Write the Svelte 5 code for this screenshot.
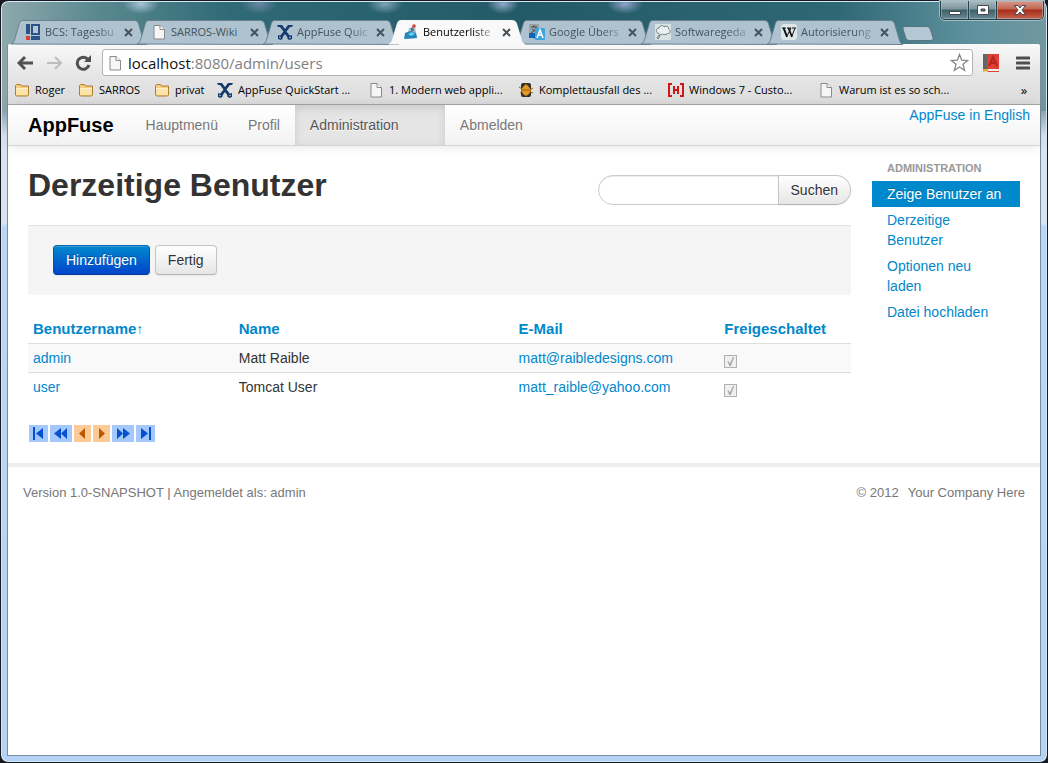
<script>
  const tabs = [
    { icon: 'bcs', title: 'BCS: Tagesbu', cut: true },
    { icon: 'page', title: 'SARROS-Wiki' },
    { icon: 'fuse', title: 'AppFuse Quic', cut: true },
    { icon: 'users', title: 'Benutzerliste', active: true, cut: true },
    { icon: 'translate', title: 'Google Übers', cut: true },
    { icon: 'cloud', title: 'Softwaregeda', cut: true },
    { icon: 'wiki', title: 'Autorisierung', cut: true }
  ];
  const bookmarks = [
    { icon: 'folder', title: 'Roger' },
    { icon: 'folder', title: 'SARROS' },
    { icon: 'folder', title: 'privat' },
    { icon: 'fuse', title: 'AppFuse QuickStart ...' },
    { icon: 'page', title: '1. Modern web appli...' },
    { icon: 'bug', title: 'Komplettausfall des ...' },
    { icon: 'heise', title: 'Windows 7 - Custo...' },
    { icon: 'page', title: 'Warum ist es so sch...' }
  ];
  const users = [
    { login: 'admin', name: 'Matt Raible', mail: 'matt@raibledesigns.com' },
    { login: 'user', name: 'Tomcat User', mail: 'matt_raible@yahoo.com' }
  ];
  const sideLinks = ['Derzeitige Benutzer', 'Optionen neu laden', 'Datei hochladen'];
  const pager = [
    { label: 'Erste Seite', w: 19, d: 'M4 2h2v13H4zM14 3v11L7 8.500z' },
    { label: 'Zehn zurück', w: 22, d: 'M11 3v11L4 8.500zM17 3v11l-6-5.500z' },
    { label: 'Vorige Seite', w: 17, warm: true, d: 'M11 3v11L5 8.500z' },
    { label: 'Nächste Seite', w: 17, warm: true, d: 'M6 3v11l6-5.500z' },
    { label: 'Zehn vor', w: 22, d: 'M5 3v11l6-5.500zM11 3v11l7-5.500z' },
    { label: 'Letzte Seite', w: 19, d: 'M13 2h2v13h-2zM5 3v11l7-5.500z' }
  ];
  let query = $state('');
  let url = $state('localhost:8080/admin/users');
</script>

{#snippet icon(name)}
  <svg class="icon" viewBox="0 0 16 16" width="16" height="16" aria-hidden="true">
    {#if name === 'bcs'}
      <path d="M1 0h4v10H1zM6 0h9v11H6z" fill="#2b5486" />
      <path d="M8 2h5v7H8z" fill="#b9c7d4" />
      <path d="M1 12h4v4H1z" fill="#d9403c" />
      <path d="M6 12h9v4H6z" fill="#2b5486" />
    {:else if name === 'page'}
      <path d="M3 1.500h6l4.500 4V15H3z" fill="#f6f6f6" stroke="#8b8b8b" />
      <path d="M9 1.500v4h4.500" fill="#fff" stroke="#8b8b8b" />
    {:else if name === 'fuse'}
      <path d="M0 1h5l3 4 3-4h5l-1 2h-2L9.500 7.500 13 12l-2 2-3-4-3 4-2-2 3.500-4.500L3 3H1z" fill="#173a6d" />
      <path d="M1 11l3 1 2 2-2 2-3-1z" fill="#173a6d" />
      <path d="M15 11l-3 1-2 2 2 2 3-1z" fill="#173a6d" />
      <path d="M2 13l2 1M14 13l-2 1" stroke="#a9bcd6" />
    {:else if name === 'users'}
      <path d="M6 4l6-1 2 11-10 1z" fill="#a9bfca" />
      <path d="M2 9l5-2 6 2 1 5-13 1z" fill="#2585bc" />
      <path d="M5 10l4-2 3 2-4 2z" fill="#63d0ee" />
      <circle cx="11" cy="2" r="1.800" fill="#da3b35" />
      <path d="M8 4l2-1 1 4-3 1z" fill="#4d7390" />
    {:else if name === 'translate'}
      <rect x="0" y="0" width="10" height="10" fill="#9ba5a6" />
      <path d="M2 3h6M5 1v2M7 3c0 3-2 4-5 6M3 5l4 3" stroke="#424d51" fill="none" />
      <path d="M0 9h7v6l-3-1H0z" fill="#1262b5" />
      <rect x="6" y="4" width="10" height="12" rx="1" fill="#40a5df" />
      <path d="M8 14l3-8 3 8M9 11h4" stroke="#fff" fill="none" stroke-width="1.500" />
    {:else if name === 'cloud'}
      <rect width="16" height="16" fill="#d8e4e4" />
      <path d="M4 9.500C0 9 1 4 4 4c1-3 4-3 5-1 3-2 5 0 4.500 2 3 2 1.500 5-1 4.500-2 2-4 1-5 .500-1 1-3 1-3.500-.500z" fill="#eaf0f0" stroke="#6f7b7b" />
      <path d="M4 11l1 1-2 3-1-1z" fill="#eaf0f0" stroke="#6f7b7b" />
    {:else if name === 'wiki'}
      <rect width="16" height="16" rx="3" fill="#dfe6e8" />
      <path d="M1 4h4M6 4h4M11 4h4" fill="none" stroke="#111" />
      <path d="M3 4l3 8 4-8" fill="none" stroke="#111" />
      <path d="M2.500 4l3.500 9M7.500 4l3.500 9" fill="none" stroke="#111" stroke-width="1.800" />
      <path d="M11 12l3-8" fill="none" stroke="#111" />
    {:else if name === 'folder'}
      <path d="M1.500 13V3.500l1-1h4l1 1.500h7V13l-1 1h-11z" fill="#f4cf82" stroke="#ad7d30" />
      <path d="M2 7h12v6H2z" fill="#fbe3a9" />
      <path d="M2 6.500h12" stroke="#fff0c7" />
    {:else if name === 'bug'}
      <rect x="3" y="1" width="10" height="14" rx="2" fill="#35312c" />
      <path d="M5 5l3-3 3 3 2 3-2 4-3 2-3-2-2-4z" fill="#e49a22" />
      <path d="M1 5l3 2M15 6l-3 2M2 11l3-1M15 11l-3-1M4 8h8" stroke="#a05d10" />
    {:else if name === 'heise'}
      <path d="M4 2H1v12h3M12 2h3v12h-3" fill="none" stroke="#cf1717" stroke-width="2" />
      <path d="M6 4v8M10 4v8M6 8h4" fill="none" stroke="#cf1717" stroke-width="2" />
    {/if}
  </svg>
{/snippet}

<div class="window">
  <header class="titlebar">
    <div class="tabs">
      {#each tabs as tab}
        <div class="tab" class:active={tab.active}>
          <svg class="shape" viewBox="0 0 136 25" preserveAspectRatio="none" aria-hidden="true">
            <path d="M0 25C3 24 3 22 4 19L8 5C9 1 10 .500 13 .500H122c4 0 5 1 6 5l4 14c1 3 1 5 4 6z" />
          </svg>
          <button class="tabmain">{@render icon(tab.icon)}<span class:cut={tab.cut}>{tab.title}</span></button>
          <button class="close" aria-label="Tab schließen">
            <svg viewBox="0 0 9 9" width="9" height="9"><path d="M1 1l7 7M8 1L1 8" /></svg>
          </button>
        </div>
      {/each}
      <button class="newtab" aria-label="Neuer Tab">
        <svg viewBox="0 0 32 15" width="32" height="15"><path d="M3 .500h22q2 0 3 2l3 9q1 3-2 3H7q-2 0-3-2L1 3Q0 .500 3 .500z" /></svg>
      </button>
    </div>
    <div class="controls">
      <button class="min" aria-label="Minimieren"><svg viewBox="0 0 14 12" width="14" height="12"><path d="M1.500 7.500h11v3h-11z" /></svg></button>
      <button class="max" aria-label="Maximieren"><svg viewBox="0 0 14 12" width="14" height="12"><path fill-rule="evenodd" d="M1.500 1.500h11v9h-11zM5 5h4v2H5z" /></svg></button>
      <button class="quit" aria-label="Schließen"><svg viewBox="0 0 14 12" width="14" height="12"><path d="M1.500 1.500H5l2 2.500 2-2.500h3.500L9 6l3.500 4.500H9L7 8l-2 2.500H1.500L5 6z" /></svg></button>
    </div>
  </header>

  <div class="body">
    <div class="chrome">
      <div class="toolbar">
        <button class="tool" aria-label="Zurück"><svg viewBox="0 0 17 16" width="17" height="16"><path d="M16 8H3M8 2L2 8l6 6" fill="none" stroke="#505050" stroke-width="3" /></svg></button>
        <button class="tool" aria-label="Vorwärts"><svg viewBox="0 0 17 16" width="17" height="16"><path d="M1 8h13M9 2l6 6-6 6" fill="none" stroke="#bdbdbd" stroke-width="2" /></svg></button>
        <button class="tool" aria-label="Neu laden"><svg viewBox="0 0 17 16" width="17" height="16"><path d="M13 4.500A6 6 0 1 0 14 10" fill="none" stroke="#505050" stroke-width="3" /><path d="M16 0v7H9z" fill="#505050" /></svg></button>
        <div class="omnibox">
          <button aria-label="Seiteninformationen">{@render icon('page')}</button>
          <div class="field">
            <div class="shown" aria-hidden="true"><b>localhost</b>:8080/admin/users</div>
            <input aria-label="Adresse" bind:value={url} />
          </div>
          <button aria-label="Lesezeichen setzen"><svg viewBox="0 0 19 19" width="19" height="19"><path d="M9.500 1.500l2.200 5.700 6 .300-4.700 3.800 1.600 5.900-5.100-3.300-5.100 3.300L6 11.300 1.300 7.500l6-.300z" fill="#fff" stroke="#858585" stroke-width="1.300" /></svg></button>
        </div>
        <button class="book" aria-label="Wörterbuch"><svg viewBox="0 0 16 18" width="16" height="18"><path d="M0 0h4v15H0z" fill="#646464" /><path d="M4 0h12v15H4z" fill="#df4034" /><path d="M4 15h12v2H4z" fill="#eee" /><path d="M4 17h12v1H4z" fill="#df4034" /><path d="M0 15h5v3l-2-1-3 1z" fill="#e6ac22" /><path d="M6 12l4-9 4 9M7 9h6" fill="none" stroke="#b5271f" stroke-width="2" /></svg></button>
        <button class="menu" aria-label="Menü"><svg viewBox="0 0 14 14" width="14" height="14"><path d="M1 2h12M1 7h12M1 12h12" stroke="#4e4e4e" stroke-width="3" stroke-linecap="round" /></svg></button>
      </div>
      <nav class="bookmarks" aria-label="Lesezeichen">
        {#each bookmarks as b}
          <a href="#bookmark">{@render icon(b.icon)}<span>{b.title}</span></a>
        {/each}
        <button aria-label="Weitere Lesezeichen">»</button>
      </nav>
    </div>

    <div class="page">
      <nav class="navbar" aria-label="Hauptnavigation">
        <a class="brand" href="#home">AppFuse</a>
        <a href="#menu">Hauptmenü</a>
        <a href="#profile">Profil</a>
        <a class="current" href="#admin">Administration</a>
        <a href="#logout">Abmelden</a>
        <a class="lang" href="#en">AppFuse in English</a>
      </nav>

      <div class="layout">
        <main>
          <div class="head">
            <h1>Derzeitige Benutzer</h1>
            <form class="search" onsubmit={(e) => e.preventDefault()}>
              <input type="text" aria-label="Suchbegriff" bind:value={query} />
              <button class="btn">Suchen</button>
            </form>
          </div>
          <div class="actions">
            <button class="btn primary">Hinzufügen</button>
            <button class="btn">Fertig</button>
          </div>
          <table>
            <thead>
              <tr>
                <th class="quarter"><a href="#sort">Benutzername<span class="arrow">↑</span></a></th>
                <th class="third"><a href="#sort">Name</a></th>
                <th class="quarter"><a href="#sort">E-Mail</a></th>
                <th><a href="#sort">Freigeschaltet</a></th>
              </tr>
            </thead>
            <tbody>
              {#each users as u}
                <tr>
                  <td><a href="#user">{u.login}</a></td>
                  <td>{u.name}</td>
                  <td><a href="#mail">{u.mail}</a></td>
                  <td><input type="checkbox" checked disabled aria-label="{u.login} freigeschaltet" /></td>
                </tr>
              {/each}
            </tbody>
          </table>
          <div class="pager">
            {#each pager as p}
              <button class:warm={p.warm} aria-label={p.label}><svg viewBox="0 0 {p.w} 17" width={p.w} height="17"><path d={p.d} /></svg></button>
            {/each}
          </div>
        </main>
        <aside>
          <h2>Administration</h2>
          <a class="on" href="#users">Zeige Benutzer an</a>
          {#each sideLinks as s}
            <a href="#side">{s}</a>
          {/each}
        </aside>
      </div>

      <footer>
        <span>Version 1.0-SNAPSHOT | Angemeldet als: admin</span>
        <span class="owner"><span>© 2012</span><a href="#company">Your Company Here</a></span>
      </footer>
    </div>
  </div>
</div>

<style>
  :global(body) { margin: 0; background: #17191f; }
  * { box-sizing: border-box; }
  button { border: 0; padding: 0; margin: 0; background: none; font: inherit; color: inherit; display: flex; align-items: center; justify-content: center; }
  a { text-decoration: none; color: #0088cc; }
  svg { display: block; flex: none; }

  .window {
    min-height: 100vh;
    display: flex;
    flex-direction: column;
    border: 1px solid #17191f;
    border-radius: 8px;
    box-shadow: inset 0 0 0 1px #d5e8f5;
    background:
      radial-gradient(ellipse 18px 10px at 140px 3px, #a9c3d8, transparent),
      radial-gradient(ellipse 18px 10px at 384px 3px, #7fa3b4, transparent),
      radial-gradient(ellipse 16px 10px at 502px 3px, #8fa9c9, transparent),
      radial-gradient(ellipse 18px 10px at 624px 3px, #8fa5c9, transparent),
      radial-gradient(ellipse 18px 10px at 258px 3px, #6b87a6, transparent),
      linear-gradient(90deg, #8fa9ad, #5a8990 9%, #2f6a76 22%, #235a68 50%, #2f6875 80%, #5f929e 93%, #71979f) 0 0 / 100% 110px no-repeat,
      linear-gradient(#7b9ba6 0, #71919d 100px, #d9e4f2 135px, #d9e4f2 222px, #b9d6f6 226px, #b5d3f4);
    font-family: "Open Sans", "Noto Sans", sans-serif;
    font-size: 11px;
  }
  .titlebar { display: flex; justify-content: space-between; height: 43px; padding: 0 3px 0 10px; }
  .tabs { display: flex; flex: 1; align-items: flex-end; min-width: 0; }
  .tab { position: relative; display: flex; align-items: center; flex: 0 1 126px; min-width: 0; height: 24px; padding: 0 1px 0 14px; color: #44525c; }
  .active { z-index: 1; color: #000; }
  .shape { position: absolute; left: 0; top: 0; width: calc(100% + 10px); height: 100%; overflow: visible; }
  .shape path { fill: #aec3cf; stroke: #687f8d; }
  .active .shape path { fill: #f9f9f9; stroke: #f9f9f9; }
  .tabmain { position: relative; flex: 1; min-width: 0; gap: 4px; justify-content: flex-start; }
  .tabmain span { text-align: left; white-space: nowrap; line-height: 16px; }
  .tabmain .cut { mask-image: linear-gradient(90deg, #000 75%, #0005); }
  .close { position: relative; width: 16px; height: 16px; }
  .close path { stroke: #47525a; stroke-width: 2; }
  .newtab { margin: 0 0 3px 9px; }
  .newtab path { fill: #b4c8d3; stroke: #587482; }
  .controls { display: flex; align-self: flex-start; border: 1px solid #27414a; border-top: 0; border-radius: 0 0 5px 5px; overflow: hidden; box-shadow: 0 0 0 1px #a4bdc4; }
  .controls button { height: 18px; width: 28px; border-right: 1px solid #27414a; background: linear-gradient(#a6b9be, #7a959c 45%, #3d5f68 50%, #6b8b94); box-shadow: inset 0 0 0 1px #b2c6cc80; }
  .controls .quit { width: 46px; border: 0; background: linear-gradient(#d69a8e, #c26451 45%, #a62b16 50%, #c7664f); }
  .controls path { fill: #fff; stroke: #43474f; }

  .body { flex: 1; display: flex; flex-direction: column; margin: 0 6px 6px; border: 1px solid #788d9e; border-top: 0; border-radius: 3px 3px 0 0; background: #fff; }
  .chrome { background: linear-gradient(#f9f9f9, #e6e6e6 50%, #dcdcdc); border-bottom: 1px solid #a6a6a6; border-radius: 3px 3px 0 0; }
  .toolbar { display: flex; align-items: center; padding: 5px 10px 0 9px; }
  .tool { width: 17px; margin-right: 12px; }
  .omnibox { flex: 1; display: flex; align-items: center; height: 27px; margin-right: 10px; padding: 0 3px 0 4px; border: 1px solid #b4b4b4; border-radius: 3px; background: #fff; margin-left: -2px; }
  .field { flex: 1; display: grid; margin-left: 5px; font-size: 15px; line-height: 22px; }
  .field > * { grid-area: 1 / 1; }
  .shown { color: #808080; }
  .shown b { font-weight: 400; color: #111; }
  .field input { width: 100%; border: 0; padding: 0; background: transparent; font: inherit; color: transparent; outline: 0; }
  .book { margin-right: 17px; }
  .bookmarks { display: grid; grid-template-columns: 64px 76px 63px 151px repeat(3, 150px) 1fr 20px; align-items: center; height: 27px; margin-bottom: 1px; padding: 0 6px; color: #000; }
  .bookmarks a { display: flex; align-items: center; gap: 5px; color: #000; white-space: nowrap; }
  .bookmarks button { font-size: 13px; }

  .page { font: 14px/20px "Liberation Sans", Arial, sans-serif; color: #333; flex: 1; }
  .navbar { display: flex; height: 41px; padding-left: 5px; background: linear-gradient(#fff, #f2f2f2); border-bottom: 1px solid #d4d4d4; box-shadow: 0 1px 10px #0000001a; }
  .navbar a { padding: 10px 15px; color: #777; text-shadow: 0 1px 0 #fff; }
  .navbar .brand { padding: 10px 17px 10px 15px; font-size: 20px; font-weight: 700; color: #000; }
  .navbar .current { width: 150px; color: #555; background: #e5e5e5; box-shadow: inset 0 3px 8px #00000020; }
  .navbar .lang { margin-left: auto; padding: 0 10px; color: #0088cc; }

  .layout { display: grid; grid-template-columns: minmax(0, 1fr) 148px; gap: 21px; padding: 9px 20px 21px; }
  .head { display: flex; justify-content: space-between; padding: 10px 0 20px; }
  h1 { margin: 0; font-size: 32px; line-height: 40px; }
  .search { display: flex; padding-top: 10px; }
  .search input { width: 181px; height: 30px; padding: 4px 14px; font: inherit; border: 1px solid #ccc; border-radius: 15px 0 0 15px; box-shadow: inset 0 1px 1px #00000013; outline: 0; }
  .search .btn { margin-left: -1px; border-radius: 0 15px 15px 0; }
  .btn { height: 30px; padding: 0 12px; border: 1px solid #c5c5c5; border-bottom-color: #b3b3b3; border-radius: 4px; background: linear-gradient(#fff, #e6e6e6); color: #333; text-shadow: 0 1px 1px #ffffffbf; box-shadow: inset 0 1px 0 #ffffff33, 0 1px 2px #0000000d; }
  .primary { color: #fff; border-color: #0268b8 #0252b0 #003a95; background: linear-gradient(#0088cc, #0044cc); text-shadow: 0 -1px 0 #00000040; }
  .actions { display: flex; gap: 5px; padding: 19px 25px 20px; margin-bottom: 20px; background: #f5f5f5; border-top: 1px solid #e5e5e5; }

  table { width: 100%; border-collapse: separate; border-spacing: 0; table-layout: fixed; }
  th, td { padding: 4px 5px; text-align: left; line-height: 20px; height: 28px; }
  th { font-size: 15px; }
  td { border-top: 1px solid #ddd; height: 29px; }
  tbody tr:nth-child(odd) td { background: #f9f9f9; }
  .quarter { width: 25%; }
  .third { width: 34%; }
  .arrow { font: 14px/16px "Liberation Serif", serif; }
  td input { appearance: none; display: block; width: 13px; height: 13px; margin: 7px 0 0; border: 1px solid #b1b1b1; background: #f0f0f0; }
  td input::before { content: ""; display: block; width: 7px; height: 9px; margin: 1px 2px; background: #aaa; clip-path: polygon(0 50%, 20% 50%, 40% 70%, 80% 0, 100% 0, 50% 100%, 30% 100%); }

  .pager { display: flex; gap: 2px; margin: 24px 0 0 1px; }
  .pager button { background: #a4c8fb; }
  .pager path { fill: #0550cf; }
  .pager .warm { background: #fbca96; }
  .pager .warm path { fill: #bd5a00; }

  aside { padding-top: 3px; }
  aside h2 { margin: 0 0 3px; padding: 0 15px; font-size: 11px; line-height: 20px; color: #999; text-transform: uppercase; text-shadow: 0 1px 0 #ffffff80; }
  aside a { display: block; padding: 3px 15px; }
  aside .on { color: #fff; background: #0088cc; text-shadow: 0 -1px 0 #00000033; }

  footer { display: flex; justify-content: space-between; padding: 16px 15px; border-top: 4px solid #eee; font-size: 13px; color: #777; }
  footer a { color: #777; }
  .owner { display: flex; gap: 9px; }
</style>
